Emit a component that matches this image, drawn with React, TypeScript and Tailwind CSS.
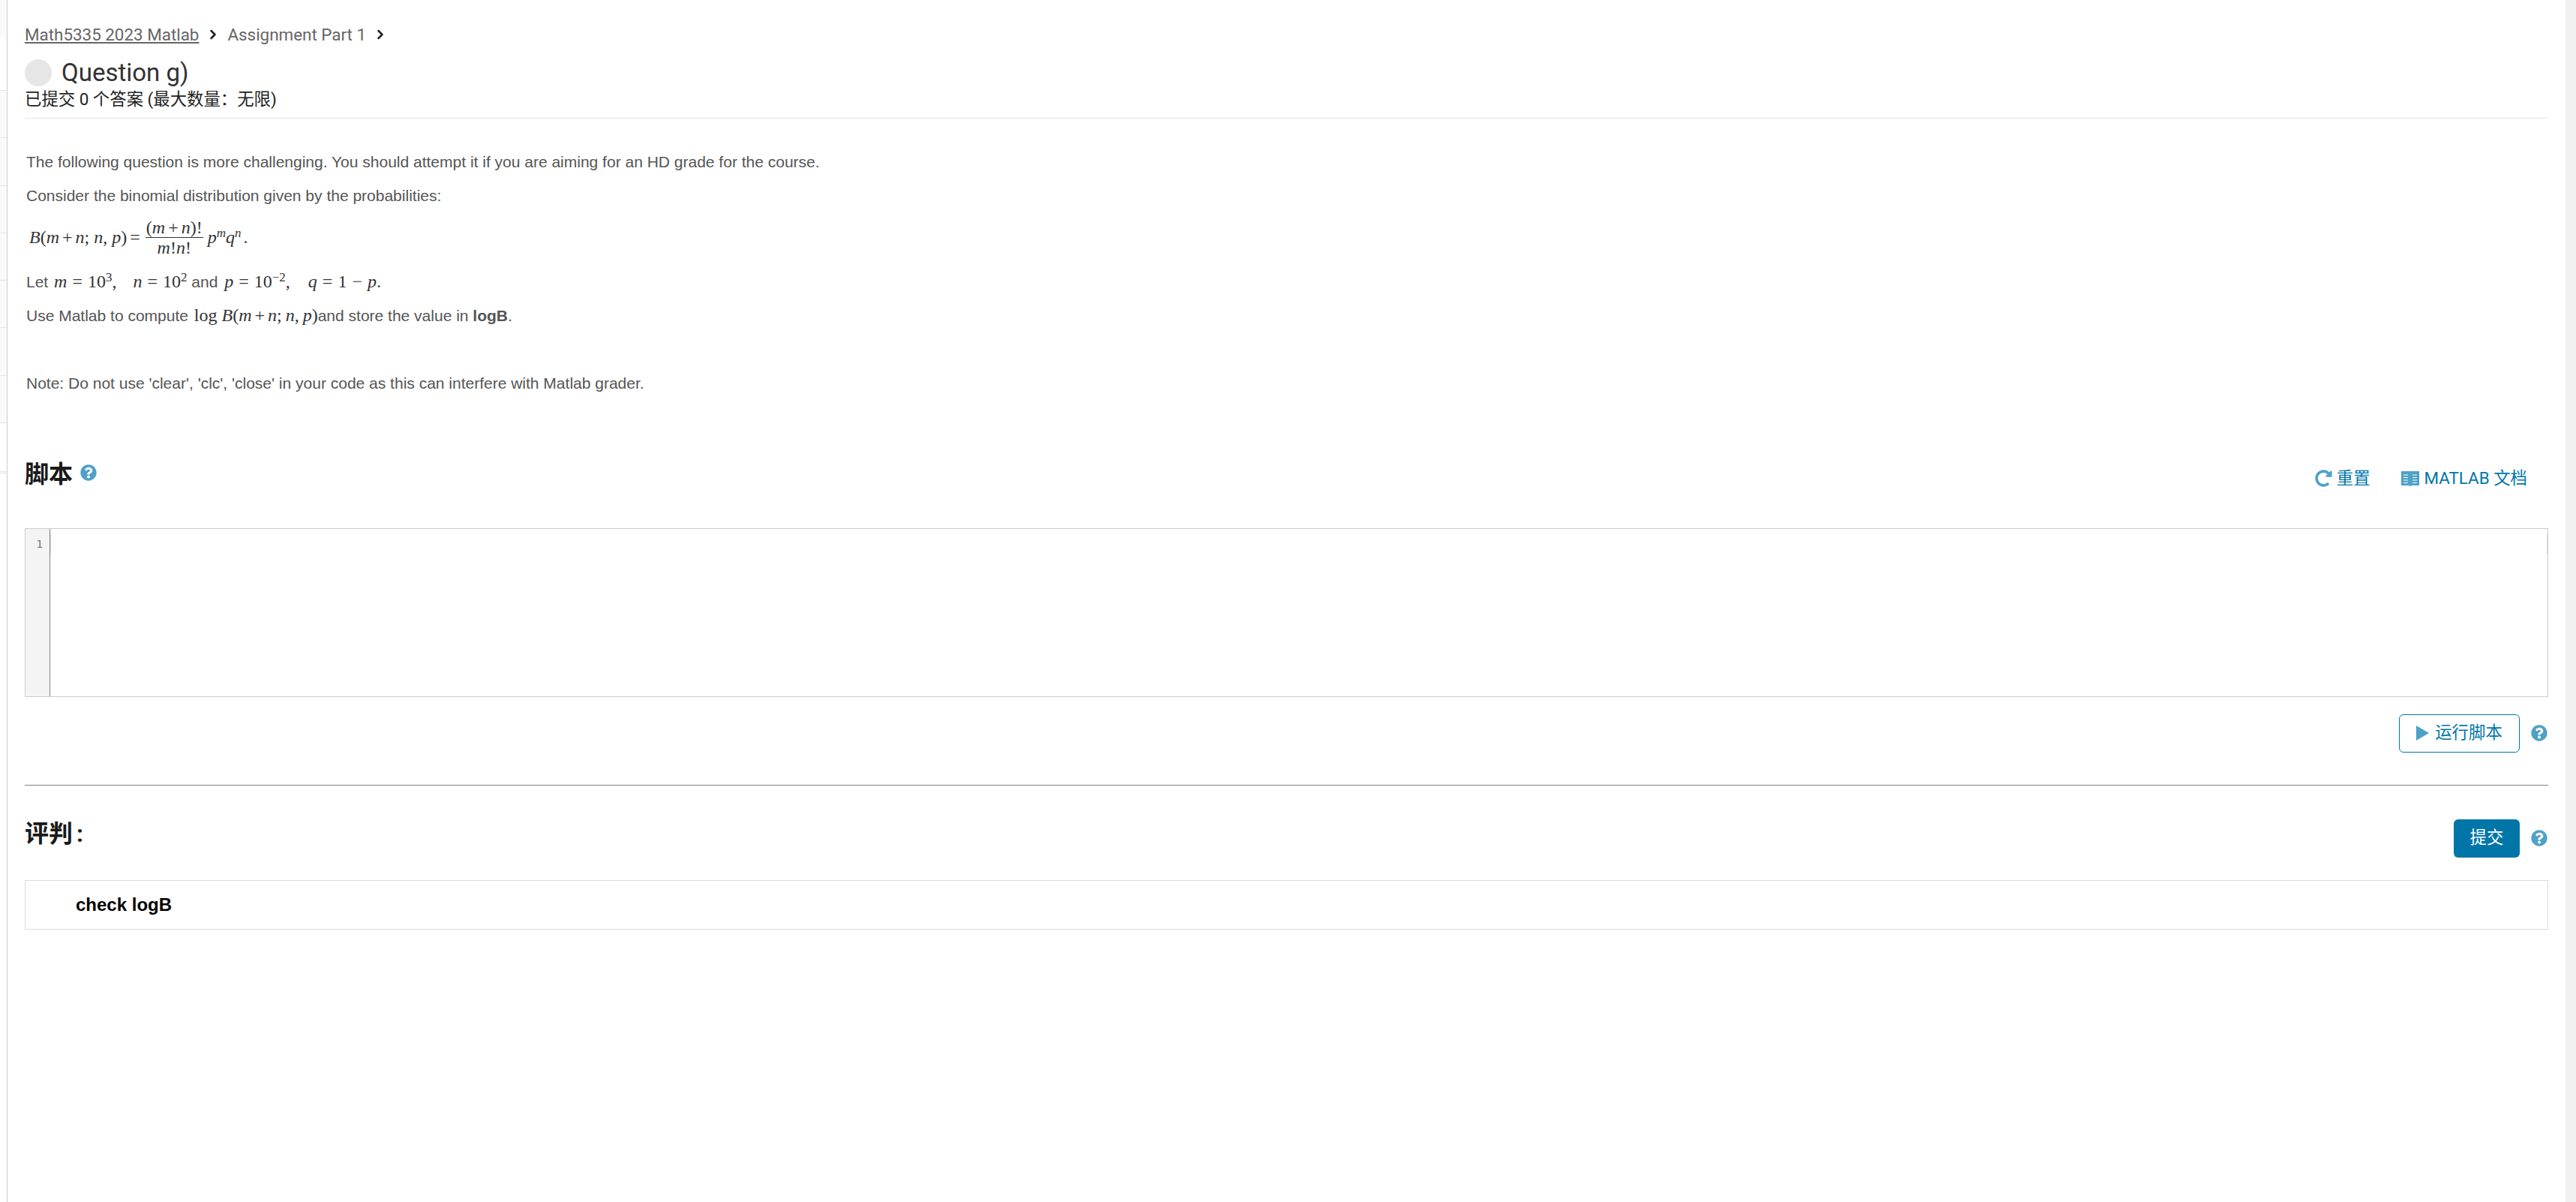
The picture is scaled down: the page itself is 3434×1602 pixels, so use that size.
import type { ReactNode } from 'react';
import { ChevronRight } from 'lucide-react';
import { FaQuestionCircle, FaRedoAlt } from 'react-icons/fa';

function Help() {
  return <FaQuestionCircle className="h-[22px] w-[22px] shrink-0 text-[#4fa1c7]" />;
}

function Book() {
  return (
    <svg viewBox="0 0 24 22" className="h-[22px] w-[24px] shrink-0">
      <path d="M0 1h11v19H0zM13 1h11v19H13z" fill="#4fa1c7" />
      <path d="M11 1h2v20h-2z" fill="#4fa1c7" />
      <path d="M3 6h6M3 9.500h6M3 13h6M3 16.500h6M15 6h6M15 9.500h6M15 13h6M15 16.500h6" stroke="#fff" strokeWidth="1.200" />
    </svg>
  );
}

function M({ children }: { children: ReactNode }) {
  return <span className="font-['Liberation_Serif',serif] text-[24px] text-[#333]">{children}</span>;
}

function Op({ children }: { children: ReactNode }) {
  return <span className="mx-[4px]">{children}</span>;
}

function Wide({ children }: { children: ReactNode }) {
  return <span className="mx-[7px]">{children}</span>;
}

function Sup({ children }: { children: ReactNode }) {
  return <sup className="text-[17px]">{children}</sup>;
}

const rows = [0, 1, 2, 3, 4, 5, 6];

export default function App() {
  return (
    <div className="flex min-h-[1602px] bg-white font-['Roboto','Noto_Sans_CJK_SC',sans-serif]">
      <div className="w-[10px] shrink-0 border-r border-[#ccc]">
        <div className="h-[50px] bg-[#fafafa]" />
        <div className="h-[71px] border-b border-[#e5e5e5]" />
        {rows.map((r) => (
          <div key={r} className="h-[63.300px] border-b border-[#e5e5e5] bg-[#fafafa]" />
        ))}
        <div className="h-[67px] border-b-[3px] border-double border-[#e5e5e5]" />
      </div>

      <div className="min-w-0 flex-1 pl-[23px] pr-[23px]">
        <div className="flex items-center gap-[9px] pt-[33px] text-[22.400px] leading-[26px] text-[#666]">
          <a className="underline">Math5335 2023 Matlab</a>
          <ChevronRight className="h-5 w-5 text-[#222]" strokeWidth={3} />
          <span>Assignment Part 1</span>
          <ChevronRight className="h-5 w-5 text-[#222]" strokeWidth={3} />
        </div>
        <div className="mt-[20px] flex items-center gap-[13px]">
          <span className="h-9 w-9 rounded-full bg-[#e6e6e6]" />
          <h1 className="text-[33px] leading-9 text-[#333]">Question g)</h1>
        </div>
        <div className="mt-[3px] border-b border-[#e5e5e5] pb-[11px] text-[22.400px] leading-[28px] text-[#222]">已提交 0 个答案 (最大数量：无限)</div>

        <div className="pl-[2px] pt-[45px] font-['Liberation_Sans',Arial,sans-serif] text-[21px] text-[#555]">
          <p className="leading-[26px]">The following question is more challenging. You should attempt it if you are aiming for an HD grade for the course.</p>
          <p className="mt-[19px] leading-[26px]">Consider the binomial distribution given by the probabilities:</p>
          <div className="mt-[12px] flex h-[60px] items-center pl-[4px]">
            <M><i>B</i>(<i>m</i><Op>+</Op><i>n</i>; <i>n</i>, <i>p</i>)<Op>=</Op></M>
            <span className="mx-[3px] inline-flex flex-col items-center font-['Liberation_Serif',serif] text-[24px] leading-[26px] text-[#333]">
              <span className="border-b border-[#333] px-[1px]">(<i>m</i><Op>+</Op><i>n</i>)!</span>
              <span><i>m</i>!<i>n</i>!</span>
            </span>
            <M><i className="ml-[3px]">p</i><Sup><i>m</i></Sup><i>q</i><Sup><i>n</i></Sup><span className="ml-[3px]">.</span></M>
          </div>
          <p className="mt-[14px] leading-[30px]">Let <M><span className="ml-[2px]" /><i>m</i><Wide>=</Wide>10<Sup>3</Sup>,<span className="ml-[22px]" /><i>n</i><Wide>=</Wide>10<Sup>2</Sup></M> and <M><span className="ml-[3px]" /><i>p</i><Wide>=</Wide>10<Sup>−2</Sup>,<span className="ml-[24px]" /><i>q</i><Wide>=</Wide>1<Wide>−</Wide><i>p</i>.</M></p>
          <p className="mt-[14px] leading-[30px]">Use Matlab to compute <M><span className="ml-[2px]" />log <i>B</i>(<i>m</i><span className="mx-[4px]">+</span><i>n</i>;<span className="ml-[5px]" /><i>n</i>,<span className="ml-[5px]" /><i>p</i>)</M>and store the value in <b>logB</b>.</p>
          <p className="mt-[62px] leading-[26px]">Note: Do not use 'clear', 'clc', 'close' in your code as this can interfere with Matlab grader.</p>
        </div>

        <div className="mt-[88px] flex items-start justify-between">
          <div className="flex items-center gap-[10px]">
            <h2 className="text-[32px] font-bold leading-[40px] text-[#1a1a1a]">脚本</h2>
            <span className="-mt-[4px]"><Help /></span>
          </div>
          <div className="flex items-center gap-[41px] pr-[28px] pt-[9px] text-[22.400px] text-[#0076a8]">
            <span className="flex items-center gap-[6px]"><FaRedoAlt className="h-[23px] w-[23px] text-[#4fa1c7]" />重置</span>
            <span className="flex items-center gap-[7px]"><Book />MATLAB 文档</span>
          </div>
        </div>

        <div className="relative mt-[49px] flex h-[225px] border border-[#ccc]">
          <div className="w-[33px] border-r border-[#808080] bg-[#f4f4f4] pr-[9px] pt-[10px] text-right font-['DejaVu_Sans_Mono',monospace] text-[14px] text-[#777]">1</div>
          <div className="flex-1" />
          <span className="absolute left-[33px] top-[7px] h-[26px] w-px bg-[#ddd]" />
          <span className="absolute right-0 top-[7px] h-[26px] w-px bg-[#ddd]" />
        </div>

        <div className="mt-[23px] flex items-center justify-end gap-[15px]">
          <button className="flex h-[51px] w-[161px] items-center justify-center gap-2 rounded-[6px] border border-[#0076a8] text-[22.400px] text-[#0076a8]">
            <svg viewBox="0 0 17 20" className="h-[20px] w-[17px]"><path d="M0 0l17 10L0 20z" fill="#4fa1c7" /></svg>运行脚本
          </button>
          <span className="mr-[1px]"><Help /></span>
        </div>

        <div className="mt-[43px] border-t border-[#808080]" />

        <div className="mt-[45px] flex items-center justify-between">
          <h2 className="-mt-[12px] text-[32px] font-bold leading-[40px] text-[#1a1a1a]">评判<span className="ml-[5px]">:</span></h2>
          <div className="flex items-center gap-[15px]">
            <button className="h-[51px] w-[88px] rounded-[6px] bg-[#0076a8] text-[22.400px] text-white">提交</button>
            <span className="mr-[1px]"><Help /></span>
          </div>
        </div>

        <div className="mt-[30px] flex h-[66px] items-center border border-[#ddd] pl-[67px] font-['Liberation_Sans',Arial,sans-serif] text-[24px] font-bold text-black">check logB</div>
      </div>
      <div className="w-[14px] shrink-0 bg-[#f1f1f1]" />
    </div>
  );
}
